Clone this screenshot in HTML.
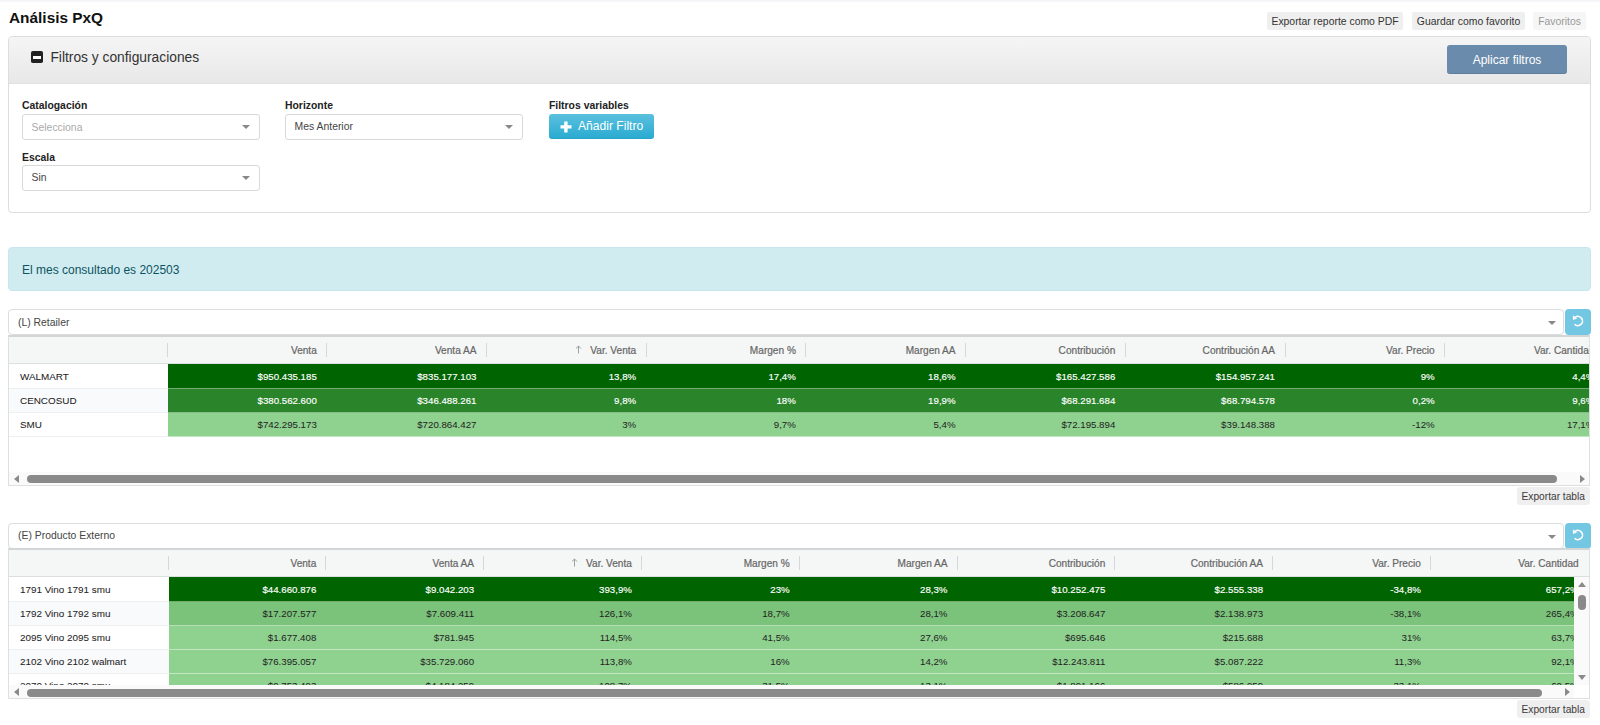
<!DOCTYPE html>
<html><head><meta charset="utf-8"><style>
*{box-sizing:border-box;margin:0;padding:0}
html,body{width:1600px;height:725px;overflow:hidden;background:#fff;font-family:"Liberation Sans",sans-serif;color:#333}
body{position:relative}
.abs{position:absolute}
.topline{left:0;top:0;width:1600px;height:2px;background:linear-gradient(#f1f3f6,#f7f8fa)}
.title{left:9px;top:9px;font-size:15.4px;font-weight:bold;color:#111;line-height:18px}
.tbtn{top:12px;height:18px;background:#efefef;border-radius:2px;font-size:10.4px;line-height:20px;color:#333;text-align:center}
.panel{left:8px;top:36px;width:1582.6px;height:177px;border:1px solid #ddd;border-radius:4px;background:#fff}
.phead{left:0;top:0;width:1580.6px;height:47px;background:linear-gradient(#f5f5f5,#e8e8e8);border-bottom:1px solid #e0e0e0;border-radius:3px 3px 0 0}
.ptitle{left:41.4px;top:12.4px;font-size:13.8px;color:#333;line-height:18px}
.picon{left:22.2px;top:14.2px;width:12px;height:12px;background:#222;border-radius:1.8px}
.picon:after{content:"";position:absolute;left:2.2px;top:4.6px;width:7.8px;height:3px;background:#fff}
.apl{left:1438px;top:8px;width:120px;height:29px;background:#6a8bab;border-bottom:1px solid #5f7f9f;border-radius:3px;color:#fff;font-size:12px;text-align:center;line-height:31px}
.lbl{font-size:10.4px;font-weight:bold;color:#222;line-height:13px}
.sel{height:25.5px;border:1px solid #d9d9d9;border-radius:3px;background:#fff;font-size:10.4px;color:#444;line-height:25px;padding-left:8.6px}
.arr{position:absolute;width:0;height:0;border-left:4px solid transparent;border-right:4px solid transparent;border-top:4px solid #888}
.sel .arr{right:9px;top:10px}
.addf{left:540px;top:77px;width:105px;height:25px;background:linear-gradient(#5bc0de,#2aabd2);border-bottom:1px solid #28a4c9;border-radius:3px;color:#fff;font-size:12.1px;line-height:25px}
.alert{left:8px;top:247px;width:1582.6px;height:44px;border:1px solid #c6e7ed;background:#d1ecf1;border-radius:4px;color:#0c5460;font-size:12px;line-height:44px;padding-left:13px}
.tsel{height:26px;border:1px solid #ddd;border-radius:4px;background:#fff;font-size:10.4px;color:#444;line-height:24px;padding-left:9px}
.tsel .arr{right:7.5px;top:11px}
.rst{width:25.5px;height:26px;background:#74c7e2;border-radius:4px}
.grid{border:1px solid #dde0e3;border-top:2px solid #c9cccf;background:#fff;overflow:hidden}
.gh{left:0;top:0;height:28px;background:#f5f6f6;border-bottom:1px solid #dfe1e3}
.hc{height:26px;font-size:10.1px;font-weight:normal;color:#666;line-height:28.6px;text-align:right;white-space:nowrap;-webkit-text-stroke:0.2px #666}
.sep{width:1px;height:14px;background:#d5d8da}
.row{left:0;height:24px;border-bottom:1px solid #eceef0}
.c0{height:24px;font-size:9.9px;color:#222;line-height:26px;padding-left:11px;white-space:nowrap;-webkit-text-stroke:0.05px #222}
.dc{height:24px;font-size:9.7px;line-height:26px;text-align:right;white-space:nowrap}
.w{-webkit-text-stroke:0.15px #fff}
.hsb{left:0;height:13px;background:#fafafa}
.thumb{height:8px;border-radius:4px;background:#8a8a8a}
.tl{width:0;height:0;border-top:4.5px solid transparent;border-bottom:4.5px solid transparent;border-right:5px solid #8a8a8a}
.tr{width:0;height:0;border-top:4.5px solid transparent;border-bottom:4.5px solid transparent;border-left:5px solid #8a8a8a}
.exp{height:18px;background:#efefef;border-radius:3px;font-size:10.2px;color:#3a3a3a;line-height:19px;text-align:center}
</style></head><body>
<div class="abs topline"></div>
<div class="abs title">Análisis PxQ</div>
<div class="abs tbtn" style="left:1267px;width:136px">Exportar reporte como PDF</div>
<div class="abs tbtn" style="left:1412px;width:113px">Guardar como favorito</div>
<div class="abs tbtn" style="left:1533px;width:53px;color:#999;background:#f6f6f6">Favoritos</div>
<div class="abs panel">
<div class="abs phead"><div class="abs picon"></div><div class="abs ptitle">Filtros y configuraciones</div><div class="abs apl">Aplicar filtros</div></div>
<div class="abs lbl" style="left:13px;top:62px">Catalogación</div>
<div class="abs sel" style="left:13px;top:77px;width:238px;color:#aaa">Selecciona<span class="arr"></span></div>
<div class="abs lbl" style="left:276px;top:62px">Horizonte</div>
<div class="abs sel" style="left:276px;top:77px;width:238px;line-height:23.5px">Mes Anterior<span class="arr"></span></div>
<div class="abs lbl" style="left:540px;top:62px">Filtros variables</div>
<div class="abs addf"><svg width="12" height="12" viewBox="0 0 12 12" style="position:absolute;left:10.5px;top:7px"><path d="M4.2 0.5h3.4v3.7h3.9v3.4H7.6v3.9H4.2V7.6H0.5V4.2h3.7z" fill="#fff"/></svg><span style="padding-left:29px">Añadir Filtro</span></div>
<div class="abs lbl" style="left:13px;top:113.6px">Escala</div>
<div class="abs sel" style="left:13px;top:128px;width:238px;line-height:23.5px">Sin<span class="arr"></span></div>
</div>
<div class="abs alert">El mes consultado es 202503</div>
<div class="abs tsel" style="left:8px;top:309px;width:1556px;line-height:25.5px">(L) Retailer<span class="arr"></span></div>
<div class="abs rst" style="left:1565px;top:309px"><svg width="14" height="14" viewBox="0 0 14 14" style="position:absolute;left:6px;top:4.8px"><path d="M4.3 3.2 A4.6 4.6 0 1 1 3.6 10.2" fill="none" stroke="#fff" stroke-width="1.6"/><path d="M1.9 1.2 L6.0 4.6 L2.0 5.9 Z" fill="#fff"/></svg></div>
<div class="abs" style="left:8px;top:335px;width:1582px;height:151px;border:1px solid #dde0e3;border-top:2px solid #d3d6d8;background:#fff"></div>
<div class="abs" style="left:9px;top:337px;width:1580px;height:27px;background:#f5f6f6;border-bottom:1px solid #dcdfe1"></div>
<div class="abs" style="left:0;top:0;width:1600px;height:725px;clip-path:inset(0 11px 0 0)">
<div class="abs sep" style="left:166.60px;top:343px"></div>
<div class="abs hc" style="left:167.10px;top:337px;width:149.70px">Venta</div>
<div class="abs sep" style="left:326.30px;top:343px"></div>
<div class="abs hc" style="left:326.80px;top:337px;width:149.70px">Venta AA</div>
<div class="abs sep" style="left:486.00px;top:343px"></div>
<svg width="7" height="9" viewBox="0 0 7 9" style="position:absolute;left:575.10px;top:344.8px"><path d="M3.5 8.5V1 M0.9 3.6 L3.5 1.0 L6.1 3.6" fill="none" stroke="#9ba1a3" stroke-width="1"/></svg><div class="abs hc" style="left:486.50px;top:337px;width:149.70px">Var. Venta</div>
<div class="abs sep" style="left:645.70px;top:343px"></div>
<div class="abs hc" style="left:646.20px;top:337px;width:149.70px">Margen %</div>
<div class="abs sep" style="left:805.40px;top:343px"></div>
<div class="abs hc" style="left:805.90px;top:337px;width:149.70px">Margen AA</div>
<div class="abs sep" style="left:965.10px;top:343px"></div>
<div class="abs hc" style="left:965.60px;top:337px;width:149.70px">Contribución</div>
<div class="abs sep" style="left:1124.80px;top:343px"></div>
<div class="abs hc" style="left:1125.30px;top:337px;width:149.70px">Contribución AA</div>
<div class="abs sep" style="left:1284.50px;top:343px"></div>
<div class="abs hc" style="left:1285.00px;top:337px;width:149.70px">Var. Precio</div>
<div class="abs sep" style="left:1444.20px;top:343px"></div>
<div class="abs hc" style="left:1444.70px;top:337px;width:149.70px">Var. Cantidad</div>
</div>
<div class="abs" style="left:0;top:0;width:1600px;height:725px;clip-path:inset(0 11px 253px 0)">
<div class="abs" style="left:9px;top:364px;width:158.60px;height:25px;background:#fff;border-bottom:1px solid #eeeff1"></div><div class="abs c0" style="left:9px;top:364.00px">WALMART</div><div class="abs" style="left:167.60px;top:364px;width:1432.90px;height:25px;background:#006400;border-bottom:1px solid rgba(255,255,255,.45)"></div><div class="abs dc w" style="left:167.10px;top:364.00px;width:149.70px;color:#fff">$950.435.185</div><div class="abs dc w" style="left:326.80px;top:364.00px;width:149.70px;color:#fff">$835.177.103</div><div class="abs dc w" style="left:486.50px;top:364.00px;width:149.70px;color:#fff">13,8%</div><div class="abs dc w" style="left:646.20px;top:364.00px;width:149.70px;color:#fff">17,4%</div><div class="abs dc w" style="left:805.90px;top:364.00px;width:149.70px;color:#fff">18,6%</div><div class="abs dc w" style="left:965.60px;top:364.00px;width:149.70px;color:#fff">$165.427.586</div><div class="abs dc w" style="left:1125.30px;top:364.00px;width:149.70px;color:#fff">$154.957.241</div><div class="abs dc w" style="left:1285.00px;top:364.00px;width:149.70px;color:#fff">9%</div><div class="abs dc w" style="left:1444.70px;top:364.00px;width:149.70px;color:#fff">4,4%</div>
<div class="abs" style="left:9px;top:389px;width:158.60px;height:24px;background:#f9fafc;border-bottom:1px solid #eeeff1"></div><div class="abs c0" style="left:9px;top:388.10px">CENCOSUD</div><div class="abs" style="left:167.60px;top:389px;width:1432.90px;height:24px;background:#2a842a;border-bottom:1px solid rgba(255,255,255,.45)"></div><div class="abs dc w" style="left:167.10px;top:388.10px;width:149.70px;color:#fff">$380.562.600</div><div class="abs dc w" style="left:326.80px;top:388.10px;width:149.70px;color:#fff">$346.488.261</div><div class="abs dc w" style="left:486.50px;top:388.10px;width:149.70px;color:#fff">9,8%</div><div class="abs dc w" style="left:646.20px;top:388.10px;width:149.70px;color:#fff">18%</div><div class="abs dc w" style="left:805.90px;top:388.10px;width:149.70px;color:#fff">19,9%</div><div class="abs dc w" style="left:965.60px;top:388.10px;width:149.70px;color:#fff">$68.291.684</div><div class="abs dc w" style="left:1125.30px;top:388.10px;width:149.70px;color:#fff">$68.794.578</div><div class="abs dc w" style="left:1285.00px;top:388.10px;width:149.70px;color:#fff">0,2%</div><div class="abs dc w" style="left:1444.70px;top:388.10px;width:149.70px;color:#fff">9,6%</div>
<div class="abs" style="left:9px;top:413px;width:158.60px;height:24px;background:#fff;border-bottom:1px solid #eeeff1"></div><div class="abs c0" style="left:9px;top:412.20px">SMU</div><div class="abs" style="left:167.60px;top:413px;width:1432.90px;height:24px;background:#8fd18f;border-bottom:1px solid rgba(255,255,255,.45)"></div><div class="abs dc" style="left:167.10px;top:412.20px;width:149.70px;color:#222">$742.295.173</div><div class="abs dc" style="left:326.80px;top:412.20px;width:149.70px;color:#222">$720.864.427</div><div class="abs dc" style="left:486.50px;top:412.20px;width:149.70px;color:#222">3%</div><div class="abs dc" style="left:646.20px;top:412.20px;width:149.70px;color:#222">9,7%</div><div class="abs dc" style="left:805.90px;top:412.20px;width:149.70px;color:#222">5,4%</div><div class="abs dc" style="left:965.60px;top:412.20px;width:149.70px;color:#222">$72.195.894</div><div class="abs dc" style="left:1125.30px;top:412.20px;width:149.70px;color:#222">$39.148.388</div><div class="abs dc" style="left:1285.00px;top:412.20px;width:149.70px;color:#222">-12%</div><div class="abs dc" style="left:1444.70px;top:412.20px;width:149.70px;color:#222">17,1%</div>
</div>
<div class="abs hsb" style="left:9px;top:472px;width:1580px"></div>
<div class="abs tl" style="left:14px;top:474.5px"></div>
<div class="abs thumb" style="left:27px;top:475px;width:1530px"></div>
<div class="abs tr" style="left:1580px;top:474.5px"></div>
<div class="abs exp" style="left:1516.5px;top:487px;width:73.5px">Exportar tabla</div>
<div class="abs tsel" style="left:8px;top:523px;width:1556px;line-height:23.5px">(E) Producto Externo<span class="arr"></span></div>
<div class="abs rst" style="left:1565px;top:523px"><svg width="14" height="14" viewBox="0 0 14 14" style="position:absolute;left:6px;top:4.8px"><path d="M4.3 3.2 A4.6 4.6 0 1 1 3.6 10.2" fill="none" stroke="#fff" stroke-width="1.6"/><path d="M1.9 1.2 L6.0 4.6 L2.0 5.9 Z" fill="#fff"/></svg></div>
<div class="abs" style="left:8px;top:548px;width:1582px;height:151px;border:1px solid #dde0e3;border-top:2px solid #d3d6d8;background:#fff"></div>
<div class="abs" style="left:9px;top:550px;width:1580px;height:27px;background:#f5f6f6;border-bottom:1px solid #dcdfe1"></div>
<div class="abs" style="left:0;top:0;width:1600px;height:725px;clip-path:inset(0 11px 0 0)">
<div class="abs sep" style="left:167.50px;top:556px"></div>
<div class="abs hc" style="left:168.00px;top:550px;width:148.30px">Venta</div>
<div class="abs sep" style="left:325.30px;top:556px"></div>
<div class="abs hc" style="left:325.80px;top:550px;width:148.30px">Venta AA</div>
<div class="abs sep" style="left:483.10px;top:556px"></div>
<svg width="7" height="9" viewBox="0 0 7 9" style="position:absolute;left:570.80px;top:557.8px"><path d="M3.5 8.5V1 M0.9 3.6 L3.5 1.0 L6.1 3.6" fill="none" stroke="#9ba1a3" stroke-width="1"/></svg><div class="abs hc" style="left:483.60px;top:550px;width:148.30px">Var. Venta</div>
<div class="abs sep" style="left:640.90px;top:556px"></div>
<div class="abs hc" style="left:641.40px;top:550px;width:148.30px">Margen %</div>
<div class="abs sep" style="left:798.70px;top:556px"></div>
<div class="abs hc" style="left:799.20px;top:550px;width:148.30px">Margen AA</div>
<div class="abs sep" style="left:956.50px;top:556px"></div>
<div class="abs hc" style="left:957.00px;top:550px;width:148.30px">Contribución</div>
<div class="abs sep" style="left:1114.30px;top:556px"></div>
<div class="abs hc" style="left:1114.80px;top:550px;width:148.30px">Contribución AA</div>
<div class="abs sep" style="left:1272.10px;top:556px"></div>
<div class="abs hc" style="left:1272.60px;top:550px;width:148.30px">Var. Precio</div>
<div class="abs sep" style="left:1429.90px;top:556px"></div>
<div class="abs hc" style="left:1430.40px;top:550px;width:148.30px">Var. Cantidad</div>
</div>
<div class="abs" style="left:0;top:0;width:1600px;height:725px;clip-path:inset(0 26px 40px 0)">
<div class="abs" style="left:9px;top:577px;width:159.50px;height:25px;background:#fff;border-bottom:1px solid #eeeff1"></div><div class="abs c0" style="left:9px;top:577.00px">1791 Vino 1791 smu</div><div class="abs" style="left:168.50px;top:577px;width:1432.00px;height:25px;background:#006400;border-bottom:1px solid rgba(255,255,255,.45)"></div><div class="abs dc w" style="left:168.00px;top:577.00px;width:148.30px;color:#fff">$44.660.876</div><div class="abs dc w" style="left:325.80px;top:577.00px;width:148.30px;color:#fff">$9.042.203</div><div class="abs dc w" style="left:483.60px;top:577.00px;width:148.30px;color:#fff">393,9%</div><div class="abs dc w" style="left:641.40px;top:577.00px;width:148.30px;color:#fff">23%</div><div class="abs dc w" style="left:799.20px;top:577.00px;width:148.30px;color:#fff">28,3%</div><div class="abs dc w" style="left:957.00px;top:577.00px;width:148.30px;color:#fff">$10.252.475</div><div class="abs dc w" style="left:1114.80px;top:577.00px;width:148.30px;color:#fff">$2.555.338</div><div class="abs dc w" style="left:1272.60px;top:577.00px;width:148.30px;color:#fff">-34,8%</div><div class="abs dc w" style="left:1430.40px;top:577.00px;width:148.30px;color:#fff">657,2%</div>
<div class="abs" style="left:9px;top:602px;width:159.50px;height:24px;background:#f9fafc;border-bottom:1px solid #eeeff1"></div><div class="abs c0" style="left:9px;top:601.10px">1792 Vino 1792 smu</div><div class="abs" style="left:168.50px;top:602px;width:1432.00px;height:24px;background:#7bc27b;border-bottom:1px solid rgba(255,255,255,.45)"></div><div class="abs dc" style="left:168.00px;top:601.10px;width:148.30px;color:#222">$17.207.577</div><div class="abs dc" style="left:325.80px;top:601.10px;width:148.30px;color:#222">$7.609.411</div><div class="abs dc" style="left:483.60px;top:601.10px;width:148.30px;color:#222">126,1%</div><div class="abs dc" style="left:641.40px;top:601.10px;width:148.30px;color:#222">18,7%</div><div class="abs dc" style="left:799.20px;top:601.10px;width:148.30px;color:#222">28,1%</div><div class="abs dc" style="left:957.00px;top:601.10px;width:148.30px;color:#222">$3.208.647</div><div class="abs dc" style="left:1114.80px;top:601.10px;width:148.30px;color:#222">$2.138.973</div><div class="abs dc" style="left:1272.60px;top:601.10px;width:148.30px;color:#222">-38,1%</div><div class="abs dc" style="left:1430.40px;top:601.10px;width:148.30px;color:#222">265,4%</div>
<div class="abs" style="left:9px;top:626px;width:159.50px;height:24px;background:#fff;border-bottom:1px solid #eeeff1"></div><div class="abs c0" style="left:9px;top:625.20px">2095 Vino 2095 smu</div><div class="abs" style="left:168.50px;top:626px;width:1432.00px;height:24px;background:#8fd18f;border-bottom:1px solid rgba(255,255,255,.45)"></div><div class="abs dc" style="left:168.00px;top:625.20px;width:148.30px;color:#222">$1.677.408</div><div class="abs dc" style="left:325.80px;top:625.20px;width:148.30px;color:#222">$781.945</div><div class="abs dc" style="left:483.60px;top:625.20px;width:148.30px;color:#222">114,5%</div><div class="abs dc" style="left:641.40px;top:625.20px;width:148.30px;color:#222">41,5%</div><div class="abs dc" style="left:799.20px;top:625.20px;width:148.30px;color:#222">27,6%</div><div class="abs dc" style="left:957.00px;top:625.20px;width:148.30px;color:#222">$695.646</div><div class="abs dc" style="left:1114.80px;top:625.20px;width:148.30px;color:#222">$215.688</div><div class="abs dc" style="left:1272.60px;top:625.20px;width:148.30px;color:#222">31%</div><div class="abs dc" style="left:1430.40px;top:625.20px;width:148.30px;color:#222">63,7%</div>
<div class="abs" style="left:9px;top:650px;width:159.50px;height:24px;background:#f9fafc;border-bottom:1px solid #eeeff1"></div><div class="abs c0" style="left:9px;top:649.30px">2102 Vino 2102 walmart</div><div class="abs" style="left:168.50px;top:650px;width:1432.00px;height:24px;background:#8fd18f;border-bottom:1px solid rgba(255,255,255,.45)"></div><div class="abs dc" style="left:168.00px;top:649.30px;width:148.30px;color:#222">$76.395.057</div><div class="abs dc" style="left:325.80px;top:649.30px;width:148.30px;color:#222">$35.729.060</div><div class="abs dc" style="left:483.60px;top:649.30px;width:148.30px;color:#222">113,8%</div><div class="abs dc" style="left:641.40px;top:649.30px;width:148.30px;color:#222">16%</div><div class="abs dc" style="left:799.20px;top:649.30px;width:148.30px;color:#222">14,2%</div><div class="abs dc" style="left:957.00px;top:649.30px;width:148.30px;color:#222">$12.243.811</div><div class="abs dc" style="left:1114.80px;top:649.30px;width:148.30px;color:#222">$5.087.222</div><div class="abs dc" style="left:1272.60px;top:649.30px;width:148.30px;color:#222">11,3%</div><div class="abs dc" style="left:1430.40px;top:649.30px;width:148.30px;color:#222">92,1%</div>
<div class="abs" style="left:9px;top:674px;width:159.50px;height:24px;background:#fff;border-bottom:1px solid #eeeff1"></div><div class="abs c0" style="left:9px;top:673.40px">2070 Vino 2070 smu</div><div class="abs" style="left:168.50px;top:674px;width:1432.00px;height:24px;background:#8fd18f;border-bottom:1px solid rgba(255,255,255,.45)"></div><div class="abs dc" style="left:168.00px;top:673.40px;width:148.30px;color:#222">$9.753.493</div><div class="abs dc" style="left:325.80px;top:673.40px;width:148.30px;color:#222">$4.184.259</div><div class="abs dc" style="left:483.60px;top:673.40px;width:148.30px;color:#222">108,7%</div><div class="abs dc" style="left:641.40px;top:673.40px;width:148.30px;color:#222">31,5%</div><div class="abs dc" style="left:799.20px;top:673.40px;width:148.30px;color:#222">13,1%</div><div class="abs dc" style="left:957.00px;top:673.40px;width:148.30px;color:#222">$1.891.166</div><div class="abs dc" style="left:1114.80px;top:673.40px;width:148.30px;color:#222">$586.959</div><div class="abs dc" style="left:1272.60px;top:673.40px;width:148.30px;color:#222">33,1%</div><div class="abs dc" style="left:1430.40px;top:673.40px;width:148.30px;color:#222">60,5%</div>
</div>
<div class="abs hsb" style="left:9px;top:685px;width:1565px;height:13px"></div>
<div class="abs tl" style="left:14px;top:688px"></div>
<div class="abs thumb" style="left:27px;top:688.5px;width:1515px"></div>
<div class="abs tr" style="left:1565px;top:688px"></div>
<div class="abs" style="left:1574px;top:577px;width:15px;height:108px;background:#fafafa"></div>
<div class="abs" style="left:1577.5px;top:582px;width:0;height:0;border-left:4.5px solid transparent;border-right:4.5px solid transparent;border-bottom:5px solid #8a8a8a"></div>
<div class="abs" style="left:1577.5px;top:595px;width:8px;height:15px;border-radius:4px;background:#8a8a8a"></div>
<div class="abs" style="left:1577.5px;top:675px;width:0;height:0;border-left:4.5px solid transparent;border-right:4.5px solid transparent;border-top:5px solid #8a8a8a"></div>
<div class="abs exp" style="left:1516.5px;top:700px;width:73.5px">Exportar tabla</div>
</body></html>
